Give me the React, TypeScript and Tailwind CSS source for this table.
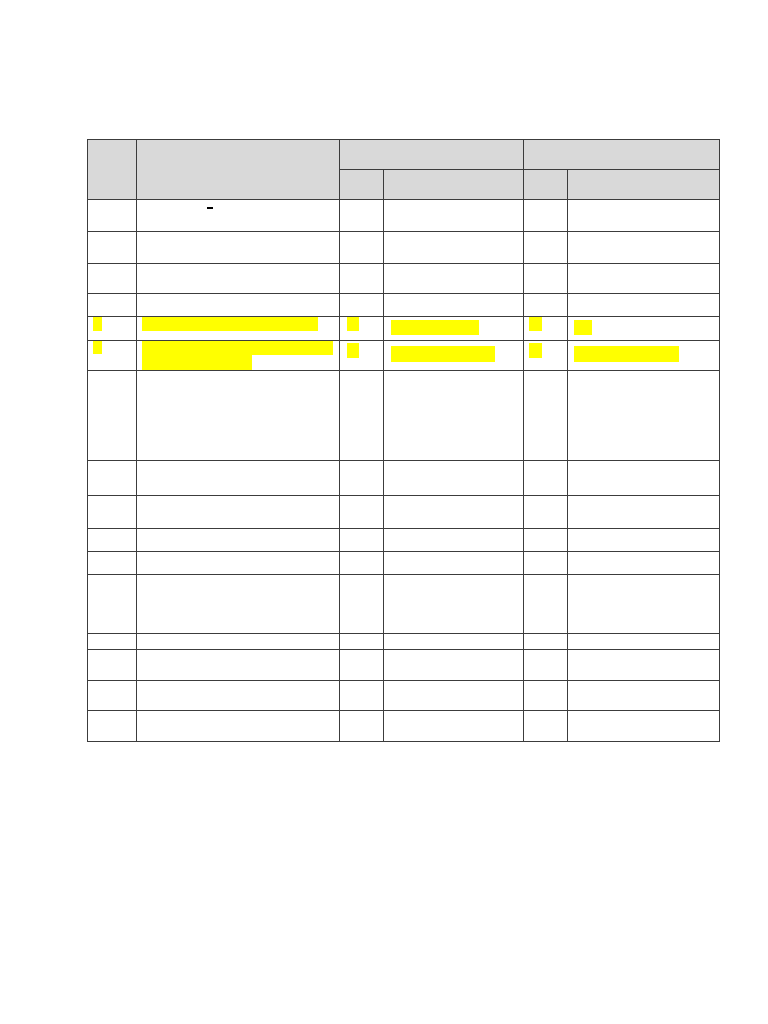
import React from "react";

const cell = "border border-[#3c3c3c] p-0 align-top";
const head = "border border-[#3c3c3c] p-0 bg-[#d9d9d9]";
const mark = "block bg-[#ffff00]";

const topRows = ["h-[32px]", "h-[32px]", "h-[30px]", "h-[23px]"];
const bottomRows = [
  "h-[90px]",
  "h-[35px]",
  "h-[33px]",
  "h-[23px]",
  "h-[23px]",
  "h-[59px]",
  "h-[16px]",
  "h-[31px]",
  "h-[30px]",
  "h-[31px]",
];

const BlankRow = ({ height, dash }: { height: string; dash?: boolean }) => (
  <tr className={height}>
    <td className={cell}></td>
    <td className={cell}>
      {dash && <span className="block ml-[70px] mt-[7px] w-[6px] h-[1.5px] bg-black" />}
    </td>
    <td className={cell}></td>
    <td className={cell}></td>
    <td className={cell}></td>
    <td className={cell}></td>
  </tr>
);

export default function App() {
  return (
    <div className="w-[768px] h-[1024px] bg-white font-['Liberation_Sans',Arial,sans-serif] pt-[139px] pl-[87px]">
      <table className="table-fixed border-collapse w-[633px]">
        <colgroup>
          <col className="w-[49px]" />
          <col className="w-[203px]" />
          <col className="w-[44px]" />
          <col className="w-[140px]" />
          <col className="w-[44px]" />
          <col className="w-[152px]" />
        </colgroup>
        <thead>
          <tr className="h-[30px]">
            <th rowSpan={2} className={head}></th>
            <th rowSpan={2} className={head}></th>
            <th colSpan={2} className={head}></th>
            <th colSpan={2} className={head}></th>
          </tr>
          <tr className="h-[30px]">
            <th className={head}></th>
            <th className={head}></th>
            <th className={head}></th>
            <th className={head}></th>
          </tr>
        </thead>
        <tbody>
          {topRows.map((h, i) => (
            <BlankRow key={i} height={h} dash={i === 0} />
          ))}

          <tr className="h-[24px]">
            <td className={cell}>
              <span className={`${mark} ml-[5px] w-[9px] h-[14px]`} />
            </td>
            <td className={cell}>
              <span className={`${mark} ml-[5px] w-[176px] h-[14px]`} />
            </td>
            <td className={cell}>
              <span className={`${mark} ml-[7px] w-[12px] h-[14px]`} />
            </td>
            <td className={cell}>
              <span className={`${mark} ml-[7px] mt-[3px] w-[88px] h-[15px]`} />
            </td>
            <td className={cell}>
              <span className={`${mark} ml-[5px] w-[13px] h-[14px]`} />
            </td>
            <td className={cell}>
              <span className={`${mark} ml-[6px] mt-[3px] w-[18px] h-[15px]`} />
            </td>
          </tr>

          <tr className="h-[30px]">
            <td className={cell}>
              <span className={`${mark} ml-[5px] w-[9px] h-[13px]`} />
            </td>
            <td className={cell}>
              <span className={`${mark} ml-[5px] w-[191px] h-[14px]`} />
              <span className={`${mark} ml-[5px] w-[110px] h-[15px]`} />
            </td>
            <td className={cell}>
              <span className={`${mark} ml-[7px] mt-[2px] w-[12px] h-[15px]`} />
            </td>
            <td className={cell}>
              <span className={`${mark} ml-[7px] mt-[5px] w-[104px] h-[16px]`} />
            </td>
            <td className={cell}>
              <span className={`${mark} ml-[5px] mt-[2px] w-[13px] h-[15px]`} />
            </td>
            <td className={cell}>
              <span className={`${mark} ml-[6px] mt-[5px] w-[105px] h-[16px]`} />
            </td>
          </tr>

          {bottomRows.map((h, i) => (
            <BlankRow key={i} height={h} />
          ))}
        </tbody>
      </table>
    </div>
  );
}
